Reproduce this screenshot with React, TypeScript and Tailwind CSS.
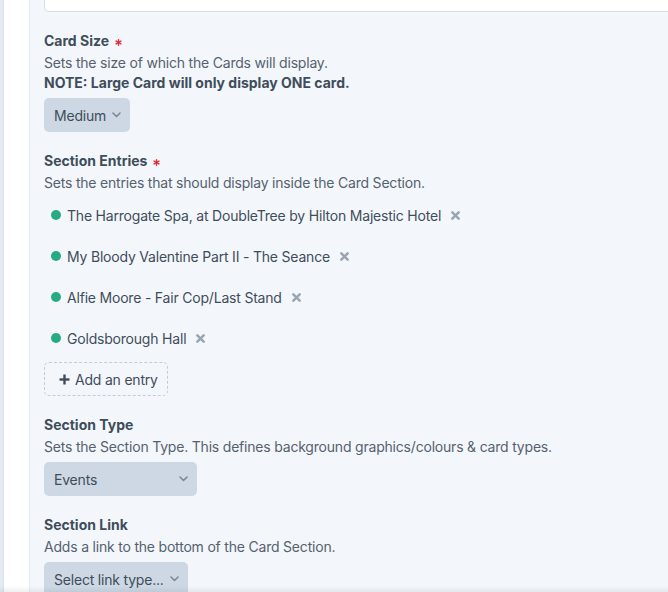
import React from "react";

const font = { fontFamily: "Inter, 'Noto Sans', sans-serif" };

function Chevron() {
  return (
    <svg width="9" height="6" viewBox="0 0 9 6" className="shrink-0">
      <path d="M1 1l3.5 3.5L8 1" fill="none" stroke="#7d8996" strokeWidth="1.6" strokeLinecap="round" strokeLinejoin="round" />
    </svg>
  );
}

function Req() {
  return (
    <svg width="7" height="7" viewBox="0 0 10 10" className="ml-[6px] mt-[2px]">
      <g stroke="#e12d39" strokeWidth="2" strokeLinecap="round">
        <line x1="5" y1="1" x2="5" y2="9" />
        <line x1="1.5" y1="3" x2="8.5" y2="7" />
        <line x1="1.5" y1="7" x2="8.5" y2="3" />
      </g>
    </svg>
  );
}

function Label({ children, required }: { children: React.ReactNode; required?: boolean }) {
  return (
    <div className="flex items-center h-[20px] mb-[2px] text-[14px] leading-[20px] font-bold text-[#3f4d5a]">
      {children}
      {required && <Req />}
    </div>
  );
}

function Desc({ children }: { children: React.ReactNode }) {
  return <div className="text-[14px] leading-[20px] tracking-[-0.2px] text-[#56616d]">{children}</div>;
}

function Select({ text, width }: { text: string; width?: string }) {
  return (
    <div
      className={`mt-[5px] h-[34px] rounded-[5px] bg-[#cdd8e4] flex items-center justify-between pl-[10px] pr-[9px] gap-[6px] text-[14px] tracking-[-0.2px] text-[#3f4d5a] ${width ?? "w-fit"}`}
    >
      <span>{text}</span>
      <Chevron />
    </div>
  );
}

function Remove() {
  return (
    <svg width="9" height="9" viewBox="0 0 10 10" className="ml-[10px] shrink-0">
      <g stroke="#9aa5b1" strokeWidth="2.8" strokeLinecap="round">
        <line x1="1.5" y1="1.5" x2="8.5" y2="8.5" />
        <line x1="8.5" y1="1.5" x2="1.5" y2="8.5" />
      </g>
    </svg>
  );
}

function Entry({ title }: { title: string }) {
  return (
    <div className="h-[34px] flex items-center pl-[7px] text-[14px] tracking-[-0.2px] text-[#3f4d5a]">
      <span className="w-[10px] h-[10px] rounded-full bg-[#27ab83] mr-[6px] shrink-0" />
      <span>{title}</span>
      <Remove />
    </div>
  );
}

export default function App() {
  const entries = [
    "The Harrogate Spa, at DoubleTree by Hilton Majestic Hotel",
    "My Bloody Valentine Part II - The Seance",
    "Alfie Moore - Fair Cop/Last Stand",
    "Goldsborough Hall",
  ];
  return (
    <div className="relative w-[668px] h-[592px] overflow-hidden flex bg-white" style={font}>
      <div className="w-[4px] bg-[#e4ebf3] border-r border-[#dae2ea]" />
      <div className="w-[26px] bg-white border-r border-[#e6ebf0]" />
      <div className="flex-1 bg-[#f3f7fc] pl-[14px] overflow-hidden">
        <div className="h-[12px] bg-white border-l border-b border-[#d6dde5] rounded-bl-[5px] mr-[-20px]" />

        <div className="mt-[19px]">
          <Label required>Card Size</Label>
          <Desc>Sets the size of which the Cards will display.</Desc>
          <Desc>
            <span className="font-bold tracking-normal text-[#3f4d5a]">NOTE: Large Card will only display ONE card.</span>
          </Desc>
          <Select text="Medium" />
        </div>

        <div className="mt-[19px]">
          <Label required>Section Entries</Label>
          <Desc>Sets the entries that should display inside the Card Section.</Desc>
          <div className="mt-[5px] flex flex-col gap-[7px]">
            {entries.map((e) => (
              <Entry key={e} title={e} />
            ))}
            <div className="w-[124px] h-[34px] rounded-[5px] border border-dashed border-[#c3ccd6] flex items-center pl-[14px] text-[14px] tracking-[-0.2px] text-[#3f4d5a]">
              <svg width="11" height="11" viewBox="0 0 11 11" className="mr-[5px]">
                <g stroke="#3f4d5a" strokeWidth="2.4">
                  <line x1="5.5" y1="0.5" x2="5.5" y2="10.5" />
                  <line x1="0.5" y1="5.5" x2="10.5" y2="5.5" />
                </g>
              </svg>
              <span>Add an entry</span>
            </div>
          </div>
        </div>

        <div className="mt-[19px]">
          <Label>Section Type</Label>
          <Desc>Sets the Section Type. This defines background graphics/colours &amp; card types.</Desc>
          <Select text="Events" width="w-[153px]" />
        </div>

        <div className="mt-[19px]">
          <Label>Section Link</Label>
          <Desc>Adds a link to the bottom of the Card Section.</Desc>
          <Select text="Select link type..." />
        </div>
      </div>
      <div className="absolute left-0 right-0 bottom-0 h-[6px] bg-gradient-to-t from-[rgba(30,50,70,0.08)] to-transparent pointer-events-none" />
    </div>
  );
}
